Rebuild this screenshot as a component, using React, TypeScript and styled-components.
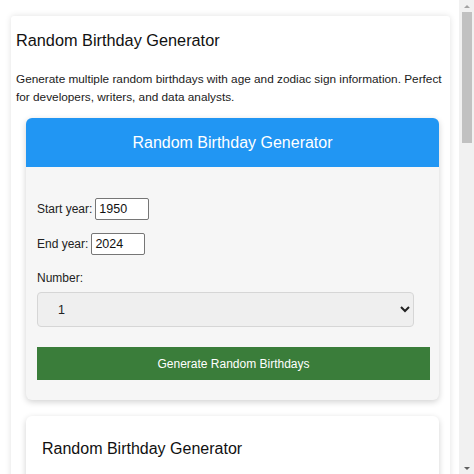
import styled, { createGlobalStyle } from "styled-components";

const GlobalStyle = createGlobalStyle`
  body {
    margin: 0 15px 0 0;
    background: #ffffff;
    font-family: "Liberation Sans", Arial, sans-serif;
    color: #222;
  }
`;

/* stand-in for the browser's classic scrollbar, drawn over the right edge */
const ScrollBar = styled.div`
  position: fixed;
  top: 0;
  right: 0;
  width: 15px;
  height: 100vh;
  background: #f1f1f1;
  display: flex;
  flex-direction: column;
  align-items: center;
`;

const Arrow = styled.div<{ $down?: boolean }>`
  height: 12px;
  width: 15px;
  display: flex;
  align-items: center;
  justify-content: center;
  margin-top: ${(p) => (p.$down ? "auto" : "0")};
  &::before {
    content: "";
    border-left: 3px solid transparent;
    border-right: 3px solid transparent;
    ${(p) =>
      p.$down
        ? "border-top: 3px solid #5f5f5f;"
        : "border-bottom: 3px solid #a3a3a3;"}
  }
`;

const Thumb = styled.div`
  align-self: stretch;
  height: 131px;
  margin: 0 2px 0 3px;
  background: #c1c1c1;
`;

const Page = styled.div`
  margin: 16px 9px 16px 11px;
  padding: 12px 5px 20px;
  background: #ffffff;
  border-radius: 3px;
  box-shadow: 0 0 6px rgba(0, 0, 0, 0.12);
`;

const Title = styled.h1`
  margin: 0;
  font-size: 16.3px;
  font-weight: 400;
  line-height: 24px;
  color: #111;
`;

const Intro = styled.p`
  margin: 18px 0 12px;
  font-size: 11.8px;
  line-height: 18px;
  color: #1a1a1a;
`;

const Card = styled.section<{ $plain?: boolean }>`
  margin: 0 6px 16px 10px;
  border-radius: 6px;
  background: ${(p) => (p.$plain ? "#ffffff" : "#f6f6f6")};
  box-shadow: 0 2px 6px rgba(0, 0, 0, 0.18);
  overflow: hidden;
`;

const CardHeader = styled.div`
  height: 49px;
  display: flex;
  align-items: center;
  justify-content: center;
  background: #2196f3;
  color: #ffffff;
  font-size: 16px;
`;

const CardBody = styled.div`
  padding: 31px 9px 20px 11px;
  display: flex;
  flex-direction: column;
`;

const Row = styled.label`
  display: flex;
  align-items: center;
  gap: 3px;
  font-size: 12px;
  color: #222;
  margin-bottom: 13px;
`;

const YearInput = styled.input`
  width: 54px;
  height: 22px;
  box-sizing: border-box;
  padding: 0 3px;
  border: 1px solid #767676;
  border-radius: 2px;
  font-family: "Liberation Sans", Arial, sans-serif;
  font-size: 12.5px;
  color: #111;
  background: #ffffff;
`;

const FieldLabel = styled.div`
  font-size: 12px;
  color: #222;
  margin: 3px 0 7px;
`;

const Select = styled.select`
  width: calc(100% - 16px);
  height: 35px;
  padding: 0 16px;
  border: 1px solid #d6d6d6;
  border-radius: 4px;
  background: #efefef;
  font-family: "Liberation Sans", Arial, sans-serif;
  font-size: 12.5px;
  color: #222;
`;

const Button = styled.button`
  margin-top: 20px;
  height: 33px;
  border: none;
  background: #3a7d3a;
  color: #ffffff;
  font-family: "Liberation Sans", Arial, sans-serif;
  font-size: 12px;
  cursor: pointer;
`;

const ResultBody = styled.div`
  padding: 23px 16px 24px;
`;

const ResultTitle = styled.h2`
  margin: 0 0 16px;
  font-size: 16px;
  font-weight: 400;
  line-height: 20px;
  color: #111;
`;

const ResultText = styled.p`
  margin: 0 0 12px;
  font-size: 12px;
  line-height: 18px;
  color: #333;
`;

const aboutText = [
  "A random birthday generator creates dates of birth within a chosen range of years. Each result shows the date, the age of the person today and the zodiac sign for that day.",
  "Use it to fill test databases, build characters for a story, or make sample data for charts and reports.",
  "Pick a start year and an end year, choose how many birthdays you want, and press the button to get a fresh list.",
  "Every date is valid: leap years are taken into account, so 29 February only appears in years that have it.",
  "The zodiac sign follows the usual western calendar, from Aries in late March to Pisces in February and March.",
  "Ages are worked out from today's date, so a birthday later this year counts one year less than the year difference.",
  "Results are created in your browser and are not stored or sent anywhere.",
];

export default function App() {
  return (
    <>
      <GlobalStyle />
      <Page>
        <Title>Random Birthday Generator</Title>
        <Intro>
          Generate multiple random birthdays with age and zodiac sign
          information. Perfect for developers, writers, and data analysts.
        </Intro>
        <Card>
          <CardHeader>Random Birthday Generator</CardHeader>
          <CardBody>
            <Row>
              Start year: <YearInput defaultValue="1950" />
            </Row>
            <Row>
              End year: <YearInput defaultValue="2024" />
            </Row>
            <FieldLabel>Number:</FieldLabel>
            <Select defaultValue="1">
              <option value="1">1</option>
              <option value="5">5</option>
              <option value="10">10</option>
            </Select>
            <Button>Generate Random Birthdays</Button>
          </CardBody>
        </Card>
        <Card $plain>
          <ResultBody>
            <ResultTitle>Random Birthday Generator</ResultTitle>
            {aboutText.map((t) => (
              <ResultText key={t}>{t}</ResultText>
            ))}
          </ResultBody>
        </Card>
      </Page>
      <ScrollBar>
        <Arrow />
        <Thumb />
        <Arrow $down />
      </ScrollBar>
    </>
  );
}
